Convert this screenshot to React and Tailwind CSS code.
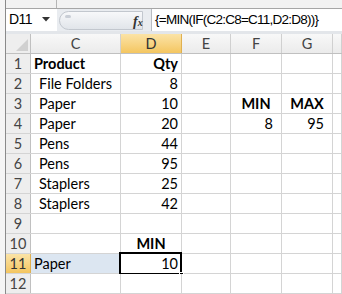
import React from "react";

const cellFont = { fontFamily: "Lato, 'Liberation Sans', sans-serif" };
const barFont = { fontFamily: "'Liberation Sans', Arial, sans-serif" };

// column widths include the right gridline
const columns = [
  { name: "C", w: "w-[90px]" },
  { name: "D", w: "w-[61px]" },
  { name: "E", w: "w-[49px]" },
  { name: "F", w: "w-[51px]" },
  { name: "G", w: "w-[51px]" },
  { name: "H", w: "flex-1" },
];

const rows = [
  { n: 1, C: { t: "Product", b: true }, D: { t: "Qty", b: true, r: true } },
  { n: 2, C: { t: "File Folders", ind: true }, D: { t: "8", r: true } },
  {
    n: 3,
    C: { t: "Paper", ind: true },
    D: { t: "10", r: true },
    F: { t: "MIN", b: true, c: true },
    G: { t: "MAX", b: true, c: true },
  },
  {
    n: 4,
    C: { t: "Paper", ind: true },
    D: { t: "20", r: true },
    F: { t: "8", r: true, pad: true },
    G: { t: "95", r: true, pad: true },
  },
  { n: 5, C: { t: "Pens", ind: true }, D: { t: "44", r: true } },
  { n: 6, C: { t: "Pens", ind: true }, D: { t: "95", r: true } },
  { n: 7, C: { t: "Staplers", ind: true }, D: { t: "25", r: true } },
  { n: 8, C: { t: "Staplers", ind: true }, D: { t: "42", r: true } },
  { n: 9 },
  { n: 10, D: { t: "MIN", b: true, c: true } },
  { n: 11, C: { t: "Paper", fill: true }, D: { t: "10", r: true, sel: true } },
  { n: 12 },
];

function Cell({ col, data }) {
  const d = data || {};
  let align = "justify-start pl-[3px]";
  if (d.ind) align = "justify-start pl-[8px]";
  if (d.r) align = d.pad ? "justify-end pr-[8px]" : "justify-end pr-[3px]";
  if (d.c) align = "justify-center";
  return (
    <div
      className={`relative flex items-center h-full border-r border-[#d4d4d4] ${col.w} ${align} ${
        d.fill ? "bg-[#dce6f1]" : "bg-white"
      } ${d.b ? "font-bold" : ""} text-[14.5px] text-black`}
    >
      {d.t}
      {d.sel && (
        <>
          <div className="absolute -left-[2px] -top-[2px] -right-[1px] -bottom-[2px] border-2 border-black pointer-events-none" />
          <div className="absolute -right-[3px] -bottom-[4px] w-[5px] h-[5px] bg-black border border-white" />
        </>
      )}
    </div>
  );
}

export default function App() {
  return (
    <div className="w-[342px] h-[294px] overflow-hidden flex bg-[#f3f3f3]" style={cellFont}>
      {/* window edge */}
      <div className="w-[6px] h-full bg-[#f5f5f5] border-r border-[#8a8a8a]" />

      <div className="flex-1 flex flex-col min-w-0">
        {/* ribbon remnant */}
        <div className="h-[9px] flex border-b border-[#a6a6a6] bg-[#f2f2f2]">
          <div className="w-[51px] border-r border-[#b5b5b5]" />
          <div className="flex-1" />
        </div>

        {/* formula bar */}
        <div className="h-[24px] flex bg-[#e9ecf0]">
          <div
            className="w-[51px] bg-white flex items-center pl-[3px] text-[14px] tracking-[-0.5px] text-black"
            style={barFont}
          >
            <span>D11</span>
            <svg className="ml-[10px]" width="8" height="5" viewBox="0 0 8 5">
              <path d="M0 0h8L4 4.5z" fill="#333" />
            </svg>
          </div>
          <div className="w-[94px] flex items-center relative">
            <div className="absolute left-[2px] top-[2px] bottom-[1px] right-[8px] rounded-l-full border border-[#c2c7ce] bg-gradient-to-b from-[#f7f8fa] to-[#e1e5ea]" />
            <div className="absolute left-[8px] top-[6px] w-[6px] h-[3px] rounded-full bg-[#c9ced6]" />
            <span
              className="absolute left-[76px] top-[2px] italic font-bold text-[14px] text-[#333]"
              style={{ fontFamily: "'Liberation Serif', serif" }}
            >
              f<span className="text-[10px]">x</span>
            </span>
          </div>
          <div
            className="flex-1 bg-white border-l border-[#b8bcc2] flex items-center pl-[3px] text-[13.5px] tracking-[-0.75px] text-black whitespace-nowrap overflow-hidden"
            style={barFont}
          >
            {"{=MIN(IF(C2:C8=C11,D2:D8))}"}
          </div>
        </div>

        <div className="h-[3px] bg-[#e3e6ea]" />

        {/* column headers */}
        <div className="h-[20px] flex border-b border-[#c0c0c0]">
          <div className="w-[25px] h-full border-r border-[#c0c0c0] bg-[#eeeeee] relative">
            <svg className="absolute right-[2px] bottom-[2px]" width="12" height="12" viewBox="0 0 12 12">
              <path d="M12 0V12H0z" fill="#d0d0d0" />
            </svg>
          </div>
          {columns.map((col) => (
            <div
              key={col.name}
              className={`${col.w} h-full flex items-center justify-center border-r text-[14.5px] ${
                col.name === "D"
                  ? "bg-gradient-to-b from-[#fbe3a6] to-[#f4c65f] border-[#e0b050] text-[#333]"
                  : "bg-gradient-to-b from-[#f8f8f8] to-[#ebebeb] border-[#d0d0d0] text-[#444]"
              }`}
            >
              {col.name === "H" ? "" : col.name}
            </div>
          ))}
        </div>

        {/* rows */}
        {rows.map((row) => (
          <div key={row.n} className="h-[20px] flex border-b border-[#d4d4d4] shrink-0">
            <div
              className={`w-[25px] h-full flex items-center justify-center border-r text-[14.5px] ${
                row.n === 11
                  ? "bg-gradient-to-b from-[#fbe3a6] to-[#f4c65f] border-[#e0b050] text-[#333]"
                  : "bg-[#eeeeee] border-[#c0c0c0] text-[#444]"
              }`}
            >
              {row.n}
            </div>
            {columns.map((col) => (
              <Cell key={col.name} col={col} data={row[col.name]} />
            ))}
          </div>
        ))}
      </div>
    </div>
  );
}
